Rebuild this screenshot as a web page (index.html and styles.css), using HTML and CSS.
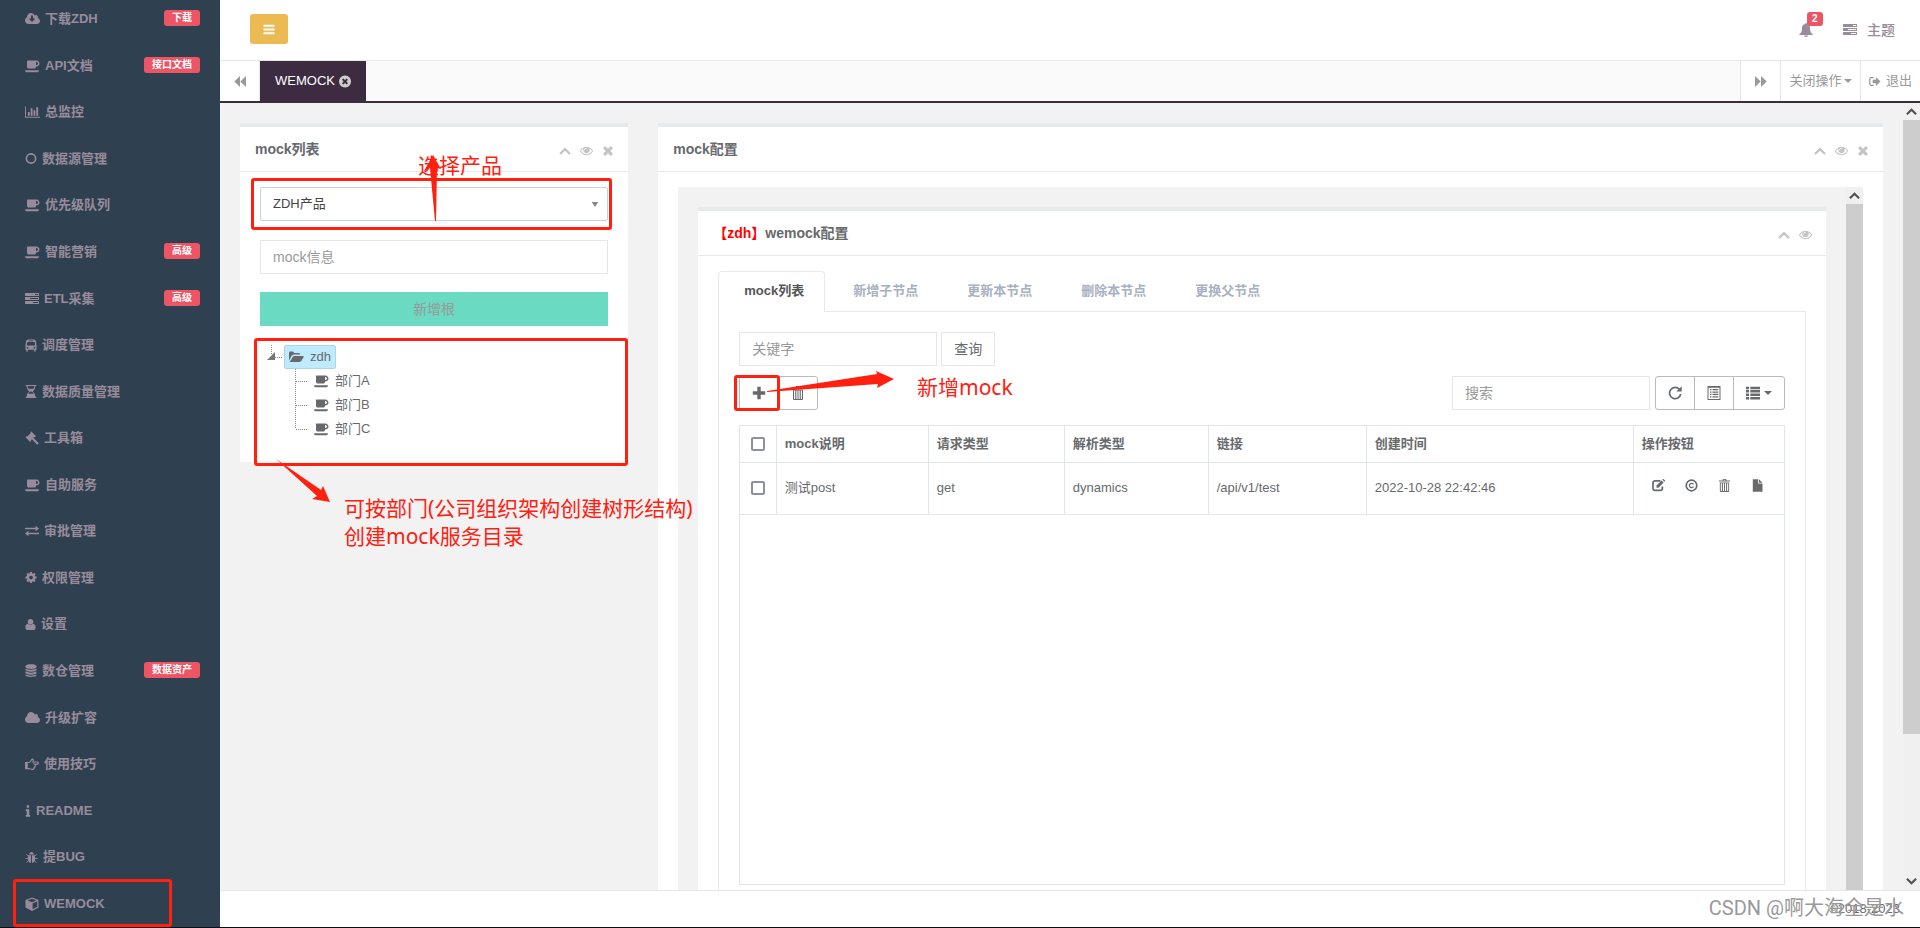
FILE: index.html
```html
<!DOCTYPE html>
<html lang="zh-CN">
<head>
<meta charset="utf-8">
<title>WEMOCK</title>
<link rel="stylesheet" href="styles.css">
</head>
<body>
<svg class="sprite" aria-hidden="true">
  <symbol id="coffee" viewBox="0 0 1920 1792"><path d="M1664 576q0-80-56-136t-136-56h-64v384h64q80 0 136-56t56-136zm-1664 864h1792q0 106-75 181t-181 75h-1280q-106 0-181-75t-75-181zm1856-864q0 159-112.500 271.500t-271.500 112.500h-64v32q0 92-66 158t-158 66h-704q-92 0-158-66t-66-158v-736q0-26 19-45t45-19h1152q159 0 271.500 112.500t112.500 271.500z"/></symbol>
  <symbol id="cloud" viewBox="0 0 1920 1792"><path transform="translate(-64 0)" d="M1984 1152q0 159-112.500 271.500t-271.500 112.500h-1088q-185 0-316.500-131.500t-131.500-316.500q0-132 71-241.500t187-163.500q-2-28-2-43 0-212 150-362t362-150q158 0 286.500 88t187.500 230q70-62 166-62 106 0 181 75t75 181q0 75-41 138 129 30 213 134.500t84 239.500z"/></symbol>
  <symbol id="cloud-down" viewBox="0 0 1920 1792"><path transform="translate(-64 0)" fill-rule="evenodd" d="M1344 864q0-14-9-23t-23-9h-224v-352q0-13-9.500-22.500t-22.500-9.500h-192q-13 0-22.500 9.500t-9.500 22.500v352h-224q-13 0-22.500 9.500t-9.500 22.500q0 14 9 23l352 352q9 9 23 9t23-9l351-351q10-12 10-24zM1984 1152q0 159-112.500 271.500t-271.500 112.500h-1088q-185 0-316.500-131.500t-131.500-316.500q0-132 71-241.500t187-163.500q-2-28-2-43 0-212 150-362t362-150q158 0 286.500 88t187.500 230q70-62 166-62 106 0 181 75t75 181q0 75-41 138 129 30 213 134.500t84 239.500z"/></symbol>
  <symbol id="chart" viewBox="0 0 2048 1792"><path d="M640 896v512h-256v-512h256zm384-512v1024h-256v-1024h256zm1024 1152v128h-2048v-1536h128v1408h1920zm-640-896v768h-256v-768h256zm384-384v1152h-256v-1152h256z"/></symbol>
  <symbol id="circle" viewBox="0 0 12 14"><circle cx="6" cy="7" r="5" fill="none" stroke="currentColor" stroke-width="1.700"/></symbol>
  <symbol id="tasks" viewBox="0 0 1792 1792"><path d="M1024 1408h640v-128h-640v128zm-384-512h1024v-128h-1024v128zm640-512h384v-128h-384v128zm512 832v256q0 26-19 45t-45 19h-1664q-26 0-45-19t-19-45v-256q0-26 19-45t45-19h1664q26 0 45 19t19 45zm0-512v256q0 26-19 45t-45 19h-1664q-26 0-45-19t-19-45v-256q0-26 19-45t45-19h1664q26 0 45 19t19 45zm0-512v256q0 26-19 45t-45 19h-1664q-26 0-45-19t-19-45v-256q0-26 19-45t45-19h1664q26 0 45 19t19 45z"/></symbol>
  <symbol id="bus" viewBox="0 0 12 14"><path fill-rule="evenodd" d="M3 .5h6q2 0 2.300 2L12 7v4.500h-1V13q0 .8-.8.800T9.300 13v-1.500H2.700V13q0 .8-.9.800T1 13v-1.500H0V7l.7-4.500Q1 .5 3 .5zM3.500 1.500v.8h5v-.8zM2 3.300 1.500 7h9L10 3.300zM2.300 8.500a.9.900 0 1 0 .01 0zM9.700 8.500a.9.900 0 1 0 .01 0z"/></symbol>
  <symbol id="hourglass" viewBox="0 0 12 14"><path fill-rule="evenodd" d="M.3 0h11.400v1.200h-1Q10.700 5 8 7q2.700 2 2.700 5.700h1V14H.3v-1.300h1Q1.300 9 4 7 1.300 5 1.300 1.200h-1zM2.500 1.200Q2.600 3 3.300 4h5.400q.7-1 .8-2.800zM5.300 7q-1.700.9-2.300 2.500h6Q8.400 7.900 6.700 7z"/></symbol>
  <symbol id="gavel" viewBox="0 0 14 14"><path d="M.5 6.300 1.500 5.300 2.300 5.600 5.600 2.300 5.300 1.500 6.300.5 11 5.200 10 6.200 9.200 5.900 8.300 6.800 13.300 11.800Q14 13 12.800 13.400L11.800 13.500 7 8.200 5.900 9.200 6.200 10 5.200 11z"/></symbol>
  <symbol id="exchange" viewBox="0 0 14 14"><path d="M0 3.700h10.500V1.800L14 4.500l-3.500 2.700V5.300H0zM14 8.700H3.500V6.800L0 9.500l3.500 2.700v-1.900H14z"/></symbol>
  <symbol id="gear" viewBox="128 0 1536 1792"><path d="M1152 896q0-106-75-181t-181-75-181 75-75 181 75 181 181 75 181-75 75-181zm512-109v222q0 12-8 23t-20 13l-185 28q-19 54-39 91 35 50 107 138 10 12 10 25t-9 23q-27 37-99 108t-94 71q-12 0-26-9l-138-108q-44 23-91 38-16 136-29 186-7 28-36 28h-222q-14 0-24.500-8.500t-11.500-21.500l-28-184q-49-16-90-37l-141 107q-10 9-25 9-14 0-25-11-126-114-165-168-7-10-7-23 0-12 8-23 15-21 51-66.500t54-70.500q-27-50-41-99l-183-27q-13-2-21-12.500t-8-23.500v-222q0-12 8-23t19-13l186-28q14-46 39-92-40-57-107-138-10-12-10-24 0-10 9-23 26-36 98.500-107.500t94.500-71.500q13 0 26 10l138 107q44-23 91-38 16-136 29-186 7-28 36-28h222q14 0 24.500 8.500t11.500 21.500l28 184q49 16 90 37l142-107q9-9 24-9 13 0 25 10 129 119 165 170 7 8 7 22 0 12-8 23-15 21-51 66.500t-54 70.500q26 50 41 98l183 28q13 2 21 12.500t8 23.500z"/></symbol>
  <symbol id="user" viewBox="0 0 11 14"><circle cx="5.500" cy="4" r="3"/><path d="M2.500 6.300Q5.500 8.500 8.500 6.300 11 7 11 10.700q0 2.300-2 2.300H2q-2 0-2-2.300Q0 7 2.500 6.300z"/></symbol>
  <symbol id="database" viewBox="0 0 12 14"><path d="M0 2.300C0-.5 12-.5 12 2.300v.9C12 6 0 6 0 3.200zM0 5q6 2.500 12 0v1.300C12 9 0 9 0 6.300zM0 8.200q6 2.500 12 0v1.300c0 2.700-12 2.700-12 0zM0 11.300q6 2.500 12 0v.9c0 2.400-12 2.400-12 0z"/></symbol>
  <symbol id="hand" viewBox="0 0 14 14"><path fill="none" stroke="currentColor" stroke-width="1.200" d="M.7 5.500H4C6 5 6 2.800 7 2.200c1.200-.2 1.600 1 .9 2.800h4.300c1.600 0 1.600 2.200 0 2.200H9.800c1 .6.8 1.700 0 2 .4.900 0 1.500-.7 1.700.1 1-.6 1.500-1.600 1.500-1.600 0-2.300-.8-3.500-.8H.7z"/><path d="M.3 5h2.500v7H.3z"/></symbol>
  <symbol id="info" viewBox="0 0 5 14"><path d="M1.200 1.300h2.500v2.400H1.200zM.3 5.200h3.500v5.900h.9v1.700H.3v-1.700h.9V6.900H.3z"/></symbol>
  <symbol id="bug" viewBox="0 0 13 14"><path d="M4 3.700a2.500 2.700 0 0 1 5 0zM6 12.800Q2.700 12.500 2.700 9V4.600H6zM7 12.800Q10.300 12.500 10.300 9V4.600H7z"/><path fill="none" stroke="currentColor" stroke-width="1" d="M3 5.500.9 3.500M10 5.500l2.100-2M3 8H0M10 8h3M3.300 10.300 1.200 12.500M9.700 10.300l2.100 2.200"/></symbol>
  <symbol id="cube" viewBox="0 0 13 14"><path fill-rule="evenodd" d="M6.500.5 13 3v7.500L6.500 14 0 10.500V3zM6.500 1.800 2 3.500l4.500 1.700L11 3.500zM7.100 6.300v6l4.700-2.500V4.600z"/></symbol>
  <symbol id="bars" viewBox="128 0 1536 1792"><path d="M1664 1344v128q0 26-19 45t-45 19h-1408q-26 0-45-19t-19-45v-128q0-26 19-45t45-19h1408q26 0 45 19t19 45zm0-512v128q0 26-19 45t-45 19h-1408q-26 0-45-19t-19-45v-128q0-26 19-45t45-19h1408q26 0 45 19t19 45zm0-512v128q0 26-19 45t-45 19h-1408q-26 0-45-19t-19-45v-128q0-26 19-45t45-19h1408q26 0 45 19t19 45z"/></symbol>
  <symbol id="bell" viewBox="0 0 14 14"><path d="M7 0q.9 0 .9 1C10 1.300 11 3 11 5c0 3.500 1 5 2.700 6.200v.8H.3v-.8C2 10 3 8.500 3 5c0-2 1-3.700 3.100-4Q6.100 0 7 0zM5 12.400h4Q8.700 14 7 14t-2-1.600z"/></symbol>
  <symbol id="back" viewBox="0 0 12 12"><path d="M6 .5v11L.3 6zM12 .5v11L6.300 6z"/></symbol>
  <symbol id="forward" viewBox="0 0 12 12"><path d="M0 .5v11L5.700 6zM6 .5v11L11.700 6z"/></symbol>
  <symbol id="signout" viewBox="0 0 13 12"><path d="M5 1.200v1.300H2.500q-1 0-1 1v5q0 1 1 1H5v1.300H2.300Q.2 10.800.2 8.700V3.300Q.2 1.200 2.300 1.200zM4 4h3.500V1.200L12.500 6l-5 4.800V8H4z"/></symbol>
  <symbol id="close-circle" viewBox="0 0 12 12"><path fill-rule="evenodd" d="M6 0a6 6 0 1 0 .01 0zM4.300 3 6 4.600 7.700 3 9 4.300 7.400 6 9 7.700 7.700 9 6 7.400 4.300 9 3 7.700 4.600 6 3 4.300z"/></symbol>
  <symbol id="chev" viewBox="0 0 12 12"><path d="M6 2.500 11.800 8.200 10.200 9.800 6 5.700 1.800 9.800.2 8.200z"/></symbol>
  <symbol id="chev-down" viewBox="0 0 12 12"><path d="M6 9.500.2 3.800 1.800 2.200 6 6.300l4.200-4.100 1.600 1.600z"/></symbol>
  <symbol id="eye" viewBox="0 0 1792 1792"><path d="M1664 960q-152-236-381-353 61 104 61 225 0 185-131.500 316.500t-316.500 131.500-316.500-131.500-131.500-316.500q0-121 61-225-229 117-381 353 133 205 333.500 326.500t434.500 121.500 434.500-121.500 333.500-326.500zm-720-384q0-20-14-34t-34-14q-125 0-214.500 89.500t-89.500 214.500q0 20 14 34t34 14 34-14 14-34q0-86 61-147t147-61q20 0 34-14t14-34zm848 384q0 34-20 69-140 230-376.500 368.500t-499.500 138.500-499.500-139-376.500-368q-20-35-20-69t20-69q140-229 376.500-368t499.500-139 499.500 139 376.500 368q20 35 20 69z"/></symbol>
  <symbol id="times" viewBox="0 0 12 12"><path d="M3.200 1 6 3.800 8.800 1 11 3.200 8.200 6 11 8.800 8.800 11 6 8.200 3.200 11 1 8.800 3.800 6 1 3.200z"/></symbol>
  <symbol id="caret" viewBox="0 0 8 4"><path d="M0 0h8L4 4z"/></symbol>
  <symbol id="triangle" viewBox="0 0 8 6"><path d="M0 0h8L4 6z"/></symbol>
  <symbol id="folder" viewBox="0 0 15 12"><path d="M0 9.500V1.700Q0 .5 1.200.5h2.600Q5 .5 5 2h5q1.200 0 1.200 1.500H5Q3.300 3.500 2.500 5zM.7 11l3-5Q4.200 4.900 5.500 4.900H14q1.200 0 .7 1L12.200 10q-.7 1-2 1z"/></symbol>
  <symbol id="plus" viewBox="0 0 14 14"><path d="M5.300.8h3.400v4.500h4.500v3.400H8.700v4.500H5.300V8.700H.8V5.300h4.500z"/></symbol>
  <symbol id="trash" viewBox="0 0 12 14"><path fill-rule="evenodd" d="M4 0h4v1.500h4V2.700H0V1.500h4zM5 .8v.7h2V.8zM1 3.700h10V13q0 1-1 1H2q-1 0-1-1zM2 4.500v8.500h1.200V4.500zM4.300 4.500v8.500h1.200V4.500zM6.500 4.500v8.500h1.200V4.500zM8.800 4.500v8.500H10V4.500z"/></symbol>
  <symbol id="refresh" viewBox="0 0 14 14"><path fill="none" stroke="currentColor" stroke-width="1.700" d="M11.500 3.500A5.600 5.600 0 1 0 12.700 8"/><path d="M13.700.2v5.300H8.400z"/></symbol>
  <symbol id="listalt" viewBox="0 0 14 14"><path fill-rule="evenodd" d="M.5 0h13v14H.5zM1.500 1.800V13h11V1.800zM3 3h1.500v1.300H3zM5.500 3h5.800v1.300H5.500zM3 5.400h1.500v1.300H3zM5.500 5.400h5.800v1.300H5.500zM3 7.800h1.500v1.300H3zM5.500 7.800h5.800v1.300H5.500zM3 10.200h1.500v1.300H3zM5.500 10.200h5.800v1.300H5.500z"/></symbol>
  <symbol id="thlist" viewBox="0 0 14 14"><path d="M0 .7h3v2.500H0zM4.300.7H14v2.500H4.300zM0 4.100h3v2.500H0zM4.300 4.100H14v2.500H4.300zM0 7.500h3V10H0zM4.300 7.500H14V10H4.300zM0 10.900h3v2.500H0zM4.300 10.900H14v2.500H4.300z"/></symbol>
  <symbol id="edit" viewBox="0 0 13 13"><path fill="none" stroke="currentColor" stroke-width="1.700" d="M8.500 1.900H3.200Q1 1.900 1 4v5.200q0 2.100 2.200 2.100h5q2.200 0 2.200-2.100V7.500"/><path d="M4.500 8.700V6.500L9.600 1.400l2 2-5.100 5.300zM10.400.8l.6-.7q.3-.2.600 0L13 1.500q.2.300 0 .6l-.7.600z"/></symbol>
  <symbol id="copy" viewBox="0 0 13 13"><circle cx="6.500" cy="6.500" r="5.300" fill="none" stroke="currentColor" stroke-width="1.700"/><path fill="none" stroke="currentColor" stroke-width="1.300" d="M8.500 5.300A2.200 2.200 0 1 0 8.500 7.700"/></symbol>
  <symbol id="file" viewBox="0 0 10 13"><path d="M.3.200h5.400v4.300H10v8.300H.3zM6.500.2 10 3.700H6.500z"/></symbol>
</svg>

<div class="app">
  <nav class="side">
    <ul class="menu">
      <li><a href="#"><svg class="i15"><use href="#cloud-down"/></svg>下载ZDH<span class="label">下载</span></a></li>
      <li><a href="#"><svg class="i15"><use href="#coffee"/></svg>API文档<span class="label">接口文档</span></a></li>
      <li><a href="#"><svg class="i15"><use href="#chart"/></svg>总监控</a></li>
      <li><a href="#"><svg class="i12"><use href="#circle"/></svg>数据源管理</a></li>
      <li><a href="#"><svg class="i15"><use href="#coffee"/></svg>优先级队列</a></li>
      <li><a href="#"><svg class="i15"><use href="#coffee"/></svg>智能营销<span class="label">高级</span></a></li>
      <li><a href="#"><svg class="i14"><use href="#tasks"/></svg>ETL采集<span class="label">高级</span></a></li>
      <li><a href="#"><svg class="i12"><use href="#bus"/></svg>调度管理</a></li>
      <li><a href="#"><svg class="i12"><use href="#hourglass"/></svg>数据质量管理</a></li>
      <li><a href="#"><svg class="i14"><use href="#gavel"/></svg>工具箱</a></li>
      <li><a href="#"><svg class="i15"><use href="#coffee"/></svg>自助服务</a></li>
      <li><a href="#"><svg class="i14"><use href="#exchange"/></svg>审批管理</a></li>
      <li><a href="#"><svg class="i12"><use href="#gear"/></svg>权限管理</a></li>
      <li><a href="#"><svg class="i11"><use href="#user"/></svg>设置</a></li>
      <li><a href="#"><svg class="i12"><use href="#database"/></svg>数仓管理<span class="label">数据资产</span></a></li>
      <li><a href="#"><svg class="i15"><use href="#cloud"/></svg>升级扩容</a></li>
      <li><a href="#"><svg class="i14"><use href="#hand"/></svg>使用技巧</a></li>
      <li><a href="#"><svg class="i5"><use href="#info"/></svg>README</a></li>
      <li><a href="#"><svg class="i13"><use href="#bug"/></svg>提BUG</a></li>
      <li><a href="#"><svg class="i14"><use href="#cube"/></svg>WEMOCK</a></li>
    </ul>
  </nav>

  <div class="main">
    <header class="top">
      <button class="toggle" aria-label="菜单"><svg class="i12"><use href="#bars"/></svg></button>
      <div class="top-links">
        <a class="bell" href="#" aria-label="消息"><svg class="i14"><use href="#bell"/></svg><span class="count">2</span></a>
        <a class="theme" href="#"><svg class="i14"><use href="#tasks"/></svg>主题</a>
      </div>
    </header>
    <div class="strip">
      <button class="roll" aria-label="向左"><svg class="i12"><use href="#back"/></svg></button>
      <a class="page-tab" href="#">WEMOCK<svg class="i12"><use href="#close-circle"/></svg></a>
      <button class="roll end" aria-label="向右"><svg class="i12"><use href="#forward"/></svg></button>
      <button class="ops">关闭操作<svg class="caret"><use href="#caret"/></svg></button>
      <a class="exit" href="#"><svg class="i12"><use href="#signout"/></svg>退出</a>
    </div>

    <div class="frame">
      <div class="cols">
        <div class="col-left">
          <section class="card">
            <div class="card-head"><h2>mock列表</h2>
              <div class="tools"><svg><use href="#chev"/></svg><svg class="eye"><use href="#eye"/></svg><svg><use href="#times"/></svg></div>
            </div>
            <div class="left-body">
              <div class="select-wrap">
                <select class="product" aria-label="产品"><option>ZDH产品</option></select>
                <svg class="arrow"><use href="#triangle"/></svg>
              </div>
              <input class="text" type="text" placeholder="mock信息" aria-label="mock信息">
              <button class="add-root">新增根</button>
              <ul class="tree">
                <li class="root"><svg class="knob" viewBox="0 0 18 24"><path d="M5.500 0v10M9 12.500h8" fill="none" stroke="#888" stroke-dasharray="1 1"/><path d="M1 15h8V7z" fill="#777"/></svg><a class="picked" href="#"><svg class="i15"><use href="#folder"/></svg>zdh</a></li>
                <li><svg class="branch" viewBox="0 0 14 24"><path d="M.5 0v24M1 12.500h12" /></svg><a href="#"><svg class="i15"><use href="#coffee"/></svg>部门A</a></li>
                <li><svg class="branch" viewBox="0 0 14 24"><path d="M.5 0v24M1 12.500h12" /></svg><a href="#"><svg class="i15"><use href="#coffee"/></svg>部门B</a></li>
                <li><svg class="branch" viewBox="0 0 14 24"><path d="M.5 0v12M1 12.500h12" /></svg><a href="#"><svg class="i15"><use href="#coffee"/></svg>部门C</a></li>
              </ul>
            </div>
          </section>
        </div>
        <div class="col-right">
          <section class="card tall">
            <div class="card-head"><h2>mock配置</h2>
              <div class="tools"><svg><use href="#chev"/></svg><svg class="eye"><use href="#eye"/></svg><svg><use href="#times"/></svg></div>
            </div>
            <div class="right-body">
              <div class="inner-frame">
                <div class="inner-page">
                  <section class="card tall">
                    <div class="card-head"><h2><span class="node">【zdh】</span>wemock配置</h2>
                      <div class="tools"><svg><use href="#chev"/></svg><svg class="eye"><use href="#eye"/></svg></div>
                    </div>
                    <div class="inner-body">
                      <div class="tabs">
                        <a class="on" href="#">mock列表</a><a href="#">新增子节点</a><a href="#">更新本节点</a><a href="#">删除本节点</a><a href="#">更换父节点</a>
                      </div>
                      <div class="pane">
                        <div class="query">
                          <input class="text keyword" type="text" placeholder="关键字" aria-label="关键字">
                          <button class="search-btn">查询</button>
                        </div>
                        <div class="bar">
                          <div class="group">
                            <button class="b40" aria-label="新增"><svg class="i14"><use href="#plus"/></svg></button>
                            <button class="b40" aria-label="删除"><svg class="i14"><use href="#trash"/></svg></button>
                          </div>
                          <div class="bar-right">
                            <input class="text keyword" type="text" placeholder="搜索" aria-label="搜索">
                            <div class="group">
                              <button class="b40" aria-label="刷新"><svg class="i14"><use href="#refresh"/></svg></button>
                              <button class="b40" aria-label="切换"><svg class="i14"><use href="#listalt"/></svg></button>
                              <button class="b52" aria-label="列"><svg class="i14"><use href="#thlist"/></svg><svg class="caret"><use href="#caret"/></svg></button>
                            </div>
                          </div>
                        </div>
                        <div class="grid">
                          <table>
                            <colgroup><col class="c1"><col class="c2"><col class="c3"><col class="c4"><col class="c5"><col class="c6"><col class="c7"></colgroup>
                            <thead><tr><th class="tick"><input type="checkbox" aria-label="全选"></th><th>mock说明</th><th>请求类型</th><th>解析类型</th><th>链接</th><th>创建时间</th><th>操作按钮</th></tr></thead>
                            <tbody><tr><td class="tick"><input type="checkbox" aria-label="选择"></td><td>测试post</td><td>get</td><td>dynamics</td><td>/api/v1/test</td><td>2022-10-28 22:42:46</td>
                              <td><div class="acts"><button aria-label="编辑"><svg><use href="#edit"/></svg></button><button aria-label="复制"><svg><use href="#copy"/></svg></button><button aria-label="删除"><svg><use href="#trash"/></svg></button><button aria-label="文档"><svg><use href="#file"/></svg></button></div></td></tr></tbody>
                          </table>
                        </div>
                      </div>
                    </div>
                  </section>
                </div>
                <div class="scroll"><svg><use href="#chev"/></svg><div class="thumb full"></div></div>
              </div>
            </div>
          </section>
        </div>
      </div>
      <div class="scroll"><svg><use href="#chev"/></svg><div class="thumb"></div><svg class="down"><use href="#chev-down"/></svg></div>
    </div>
    <footer class="foot">©2018-2023</footer>
  </div>
</div>

<div class="notes">
  <div class="box box-product"></div>
  <div class="box box-tree"></div>
  <div class="box box-add"></div>
  <div class="box box-menu"></div>
  <p class="note note-product">选择产品</p>
  <p class="note note-add">新增mock</p>
  <p class="note note-tree">可按部门(公司组织架构创建树形结构)<br>创建mock服务目录</p>
  <svg class="arrows">
    <path d="M433 155l8 14-4-1-1 53h-1l-5-53-6 3z"/>
    <path d="M276 459l45 31 2-4 7 16-18-3 5-3z"/>
    <path d="M767 391l110-17-1-3 18 8-17 9 1-4-111 8z"/>
  </svg>
  <p class="mark">CSDN @啊大海全是水</p>
</div>
</body>
</html>
```
FILE: styles.css
```css
* { box-sizing: border-box; }
body {
  margin: 0;
  background: #0b0d12;
  color: #676a6c;
  font: 13px/20px "Liberation Sans", "Noto Sans CJK SC", sans-serif;
}
a { color: inherit; text-decoration: none; }
ul { list-style: none; margin: 0; padding: 0; }
h2, p { margin: 0; }
button, input, select { font: inherit; color: inherit; margin: 0; border-radius: 0; }
button { border: 0; background: none; padding: 0; display: flex; align-items: center; justify-content: center; }
svg { fill: currentColor; flex: none; display: block; }
.sprite { display: none; }
.i5 { width: 6px; height: 14px; }
.i11 { width: 11px; height: 13px; }
.i12 { width: 12px; height: 13px; }
.i13 { width: 13px; height: 13px; }
.i14 { width: 14px; height: 14px; }
.i15 { width: 15px; height: 14px; }
.caret { width: 8px; height: 4px; }

.app { display: flex; height: calc(100vh - 1px); overflow: hidden; }

.side { flex: 0 0 220px; background: #2f4050; display: flex; flex-direction: column; }
.menu { flex: 1; margin-top: -4px; display: grid; grid-auto-rows: 1fr; color: #988c9c; font-weight: 700; }
.menu li { display: flex; }
.menu a { flex: 1; display: flex; align-items: center; gap: 5px; padding: 0 20px 0 25px; }
.label { margin: 0 0 2px auto; padding: 0 8px; border-radius: 3px; background: #ed5565; color: #fff; font-size: 10px; line-height: 16px; }

.main { flex: 1; min-width: 0; display: flex; flex-direction: column; background: #fff; }
.top { flex: 0 0 61px; border-bottom: 1px solid #e7e7e7; display: flex; justify-content: space-between; padding: 14px 25px 0 30px; }
.toggle { width: 38px; height: 30px; border-radius: 3px; background: #ecba52; color: #fff; }
.top-links { display: flex; gap: 30px; color: #988c9c; font-size: 14px; font-weight: 500; padding-top: 6px; }
.bell { position: relative; padding-top: 3px; }
.count { position: absolute; left: 8px; top: -8px; padding: 0 5px; border-radius: 3px; background: #ed5565; color: #fff; font-size: 10px; font-weight: 700; line-height: 14px; }
.theme { display: flex; gap: 10px; height: 20px; align-items: center; }

.strip { flex: 0 0 42px; display: flex; background: #fafafa; border-bottom: 2px solid #3d2c40; color: #999; }
.roll, .ops, .exit { background: #fff; border-right: 1px solid #e7e7e7; }
.roll { width: 40px; }
.roll.end { width: 41px; margin-left: auto; border-left: 1px solid #e7e7e7; }
.page-tab { display: flex; align-items: center; gap: 4px; padding: 0 15px; background: #3d2b42; color: #fff; }
.page-tab svg { color: #ccc; }
.ops { width: 80px; gap: 2px; }
.exit { width: 59px; border: 0; display: flex; align-items: center; gap: 5px; padding-left: 8px; }

.frame { flex: 1; min-height: 0; display: flex; background: #f2f2f2; border-bottom: 1px solid #e7e7e7; }
.cols { flex: 1; min-width: 0; display: flex; padding: 20px 5px 0; overflow: hidden; }
.col-left { width: 25%; padding: 0 15px; }
.col-right { width: 75%; padding: 0 15px; display: flex; }
.card { background: #fff; border-top: 4px solid #e7eaec; }
.tall { flex: 1; min-width: 0; display: flex; flex-direction: column; }
.card-head { display: flex; justify-content: space-between; align-items: center; height: 45px; flex: none; padding: 0 14px 0 15px; border-bottom: 1px solid #e7eaec; }
.card-head h2 { font-size: 14px; line-height: 20px; }
.node { color: #f00; }
.tools { display: flex; gap: 9px; align-items: center; color: #c4c4c4; padding-top: 3px; }
.tools svg { width: 12px; height: 12px; }
.tools .eye { width: 13px; height: 13px; }

.left-body { padding: 15px 20px 20px; display: flex; flex-direction: column; min-height: 290px; }
.select-wrap { position: relative; display: flex; }
.product { appearance: none; flex: 1; height: 34px; border: 1px solid #c8d3de; border-radius: 2px; background: #fff; color: #444; padding: 0 12px; }
.arrow { position: absolute; right: 9px; top: 15px; width: 8px; height: 5px; color: #888; }
.text { height: 34px; border: 1px solid #e5e6e7; background: #fff; padding: 0 12px; font-size: 14px; }
.text::placeholder { color: #999; opacity: 1; }
.left-body .text { margin: 19px 0 18px; }
.add-root { height: 34px; background: #6bdac2; color: #999; font-size: 14px; }
.tree { margin-top: 19px; height: 96px; }
.tree li { height: 24px; display: flex; align-items: center; padding-left: 35px; }
.tree .root { padding-left: 6px; }
.tree a { display: flex; align-items: center; gap: 6px; height: 24px; padding: 0 5px; }
.tree .picked { background: #beebff; border: 1px solid #b0d4e2; border-radius: 2px; padding: 0 4px; }
.knob { width: 18px; height: 24px; }
.branch { width: 14px; height: 24px; fill: none; stroke: #888; stroke-dasharray: 1 1; }

.right-body { flex: 1; min-height: 0; display: flex; padding: 15px 20px 0; }
.inner-frame { flex: 1; min-width: 0; display: flex; background: #f2f2f2; }
.inner-page { flex: 1; min-width: 0; display: flex; padding: 20px 20px 0; }
.inner-body { flex: 1; padding: 15px 20px 0; display: flex; flex-direction: column; }
.tabs { display: flex; gap: 2px; color: #a7b1c2; font-weight: 700; }
.tabs a { height: 40px; padding: 9px 20px 9px 25px; border: 1px solid transparent; border-bottom: 0; }
.tabs .on { height: 41px; margin-bottom: -1px; position: relative; background: #fff; color: #555; border-color: #e7eaec; border-radius: 4px 4px 0 0; }
.pane { flex: 1; border: 1px solid #e7eaec; border-bottom: 0; padding: 20px 20px 5px; display: flex; flex-direction: column; }
.query { display: flex; gap: 4px; }
.keyword { width: 198px; }
.search-btn { width: 54px; height: 34px; border: 1px solid #e5e6e7; background: #fff; font-size: 14px; }
.bar { display: flex; justify-content: space-between; margin: 10px 0 15px; }
.bar-right { display: flex; gap: 5px; }
.group { display: flex; }
.group button { height: 34px; border: 1px solid #bbb; background: #fff; gap: 4px; }
.group button + button { margin-left: -1px; }
.group button:first-child { border-radius: 3px 0 0 3px; }
.group button:last-child { border-radius: 0 3px 3px 0; }
.b40 { width: 40px; }
.b52 { width: 52px; }
.grid { flex: 1; border: 1px solid #e1e6e9; }
table { width: 100%; table-layout: fixed; border-collapse: collapse; }
.c1 { width: 36px; } .c2 { width: 152px; } .c3 { width: 136px; } .c4 { width: 144px; }
.c5 { width: 158px; } .c6 { width: 267px; } .c7 { width: 151px; }
th, td { text-align: left; padding: 0 8px; border-right: 1px solid #e1e6e9; border-bottom: 1px solid #e1e6e9; }
th:last-child, td:last-child { border-right: 0; }
th { height: 36px; }
td { height: 52px; }
.tick { padding: 0 0 0 11px; }
.tick input { appearance: none; display: block; width: 14px; height: 14px; border: 2px solid #8f8fa0; border-radius: 2px; background: #fff; }
.acts { display: flex; gap: 20px; padding: 0 0 6px 10px; }
.acts svg { width: 13px; height: 13px; }

.scroll { flex: 0 0 17px; background: #f0f0f0; display: flex; flex-direction: column; align-items: center; color: #505050; }
.scroll svg { width: 11px; height: 17px; }
.thumb { width: 17px; height: 78%; background: #cdcdcd; }
.thumb.full { flex: 1; }
.down { margin-top: auto; }
.foot { flex: 0 0 36px; padding: 8px 20px 0; text-align: right; }

.notes { position: absolute; inset: 0; overflow: hidden; pointer-events: none; color: #ff2010; }
.box { position: absolute; border: 3px solid #ff2010; border-radius: 3px; }
.box-product { left: 251px; top: 178px; width: 361px; height: 52px; }
.box-tree { left: 254px; top: 338px; width: 374px; height: 128px; }
.box-add { left: 734px; top: 375px; width: 46px; height: 36px; }
.box-menu { left: 13px; top: 879px; width: 159px; height: 48px; }
.note { position: absolute; font: 21px/28px "Noto Sans", "Noto Sans CJK SC", sans-serif; white-space: nowrap; }
.note-product { left: 418px; top: 151px; }
.note-add { left: 917px; top: 373px; }
.note-tree { left: 344px; top: 494px; }
.arrows { position: absolute; left: 0; top: 0; width: 100%; height: 100%; }
.mark { position: absolute; right: 16px; bottom: 6px; font: 20px/28px Roboto, "Noto Sans CJK SC", sans-serif; color: #999; }
```
